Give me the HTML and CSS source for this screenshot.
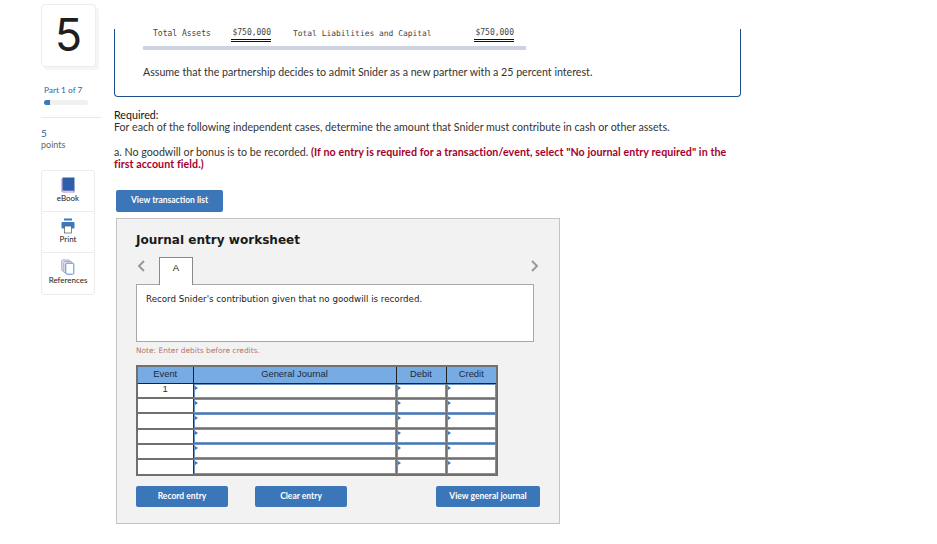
FILE: index.html
```html
<!DOCTYPE html>
<html lang="en">
<head>
<meta charset="utf-8">
<title>Journal entry worksheet</title>
<link rel="stylesheet" href="styles.css">
</head>
<body>
<div class="page">
  <aside class="side">
    <div class="num-card"><div class="num">5</div></div>
    <div class="part">Part 1 of 7</div>
    <div class="progress"><div class="progress-fill"></div></div>
    <div class="pts"><div class="pts-n">5</div><div class="pts-l">points</div></div>
    <div class="tools">
      <div class="tool">
        <svg class="tool-icon" viewBox="0 0 14 16" width="14" height="16"><path d="M1 1.5 L1 14 Q1 15 2.5 15 L13 15 L13 13.5 L2.5 13.5" fill="none" stroke="#a98fd0" stroke-width="1.2"/><rect x="1.5" y="0.5" width="12" height="13" fill="#2f5ea8"/></svg>
        <span>eBook</span>
      </div>
      <div class="tool">
        <svg class="tool-icon" viewBox="0 0 14 16" width="14" height="16"><rect x="3" y="0.5" width="8" height="2" fill="#3b78bd"/><rect x="0.5" y="4" width="13" height="6.5" rx="1" fill="#3b78bd"/><rect x="3.5" y="8" width="7" height="7" fill="#fff" stroke="#555" stroke-width="0.7"/></svg>
        <span>Print</span>
      </div>
      <div class="tool">
        <svg class="tool-icon" viewBox="0 0 14 16" width="14" height="16"><rect x="0.8" y="1" width="8" height="11" rx="1" fill="#eee" stroke="#b49bd6"/><rect x="2.8" y="2.5" width="8" height="11" rx="1" fill="#eee" stroke="#9aa8d8"/><rect x="4.8" y="4.2" width="8" height="11" rx="1" fill="#fff" stroke="#5f8ccb"/></svg>
        <span>References</span>
      </div>
    </div>
  </aside>
  <main class="main">
    <section class="case-box">
      <div class="ledger">
        <span class="l-a">Total Assets</span>
        <span class="l-b amt">$750,000</span>
        <span class="l-c">Total Liabilities and Capital</span>
        <span class="l-d amt">$750,000</span>
      </div>
      <div class="ledger-bar"></div>
      <p class="assume">Assume that the partnership decides to admit Snider as a new partner with a 25 percent interest.</p>
    </section>
    <p class="req"><span class="req-h">Required:</span><br>For each of the following independent cases, determine the amount that Snider must contribute in cash or other assets.</p>
    <p class="part-a">a. No goodwill or bonus is to be recorded. <b class="warn">(If no entry is required for a transaction/event, select "No journal entry required" in the</b><br><b class="warn">first account field.)</b></p>
    <button class="btn btn-list">View transaction list</button>
    <section class="panel">
      <h2 class="panel-h">Journal entry worksheet</h2>
      <div class="tabs">
        <svg class="chev" viewBox="0 0 10 14" width="10" height="14"><path d="M8 2 L3 7 L8 12" fill="none" stroke="#999" stroke-width="2"/></svg>
        <div class="tab">A</div>
        <svg class="chev chev-r" viewBox="0 0 10 14" width="10" height="14"><path d="M2 2 L7 7 L2 12" fill="none" stroke="#999" stroke-width="2"/></svg>
      </div>
      <div class="instr">Record Snider's contribution given that no goodwill is recorded.</div>
      <div class="note">Note: Enter debits before credits.</div>
      <table class="je">
        <thead><tr><th class="c-ev">Event</th><th class="c-gj">General Journal</th><th class="c-dr">Debit</th><th class="c-cr">Credit</th></tr></thead>
        <tbody>
          <tr><td class="ev">1</td><td class="in"><div class="field"></div></td><td class="in"><div class="field"></div></td><td class="in"><div class="field"></div></td></tr>
          <tr><td class="ev"></td><td class="in"><div class="field"></div></td><td class="in"><div class="field"></div></td><td class="in"><div class="field"></div></td></tr>
          <tr><td class="ev"></td><td class="in"><div class="field"></div></td><td class="in"><div class="field"></div></td><td class="in"><div class="field"></div></td></tr>
          <tr><td class="ev"></td><td class="in"><div class="field"></div></td><td class="in"><div class="field"></div></td><td class="in"><div class="field"></div></td></tr>
          <tr><td class="ev"></td><td class="in"><div class="field"></div></td><td class="in"><div class="field"></div></td><td class="in"><div class="field"></div></td></tr>
          <tr><td class="ev"></td><td class="in"><div class="field"></div></td><td class="in"><div class="field"></div></td><td class="in"><div class="field"></div></td></tr>
        </tbody>
      </table>
      <div class="actions">
        <button class="btn btn-rec">Record entry</button>
        <button class="btn btn-clr">Clear entry</button>
        <button class="btn btn-view">View general journal</button>
      </div>
    </section>
  </main>
</div>
</body>
</html>
```
FILE: styles.css
```css
* { box-sizing: border-box; }
html, body { margin: 0; padding: 0; background: #fff; }
body { width: 937px; height: 544px; overflow: hidden; font-family: "Lato", "Open Sans", sans-serif; color: #222; }
.page { display: flex; align-items: flex-start; padding-left: 41px; }

.side { width: 54px; flex: none; padding-top: 4px; }
.num-card { width: 55px; height: 63px; border: 1px solid #ececec; border-radius: 4px; background: #fff; box-shadow: 3px 3px 0 0 #f5f5f5; display: flex; align-items: center; justify-content: center; padding-bottom: 2px; }
.num { font-family: "Inter", "Open Sans", sans-serif; font-size: 45px; line-height: 1; color: #1e1e1e; }
.part { margin: 17px 0 0 3px; font-size: 8.3px; line-height: 12px; color: #2f5fa5; white-space: nowrap; }
.progress { margin: 4px 0 0 3px; width: 44px; height: 5px; border-radius: 3px; background: #f0f0f0; overflow: hidden; }
.progress-fill { width: 6px; height: 5px; background: #3b78bd; }
.pts { margin-top: 12px; border-top: 1px solid #e8e8e8; padding-top: 9px; width: 60px; }
.pts-n { font-size: 10px; line-height: 12px; color: #2f5a96; }
.pts-l { font-size: 9px; line-height: 12px; color: #666; }
.tools { margin-top: 19px; width: 54px; border: 1px solid #ececec; border-radius: 3px; }
.tool { height: 41px; border-bottom: 1px solid #ececec; display: flex; flex-direction: column; align-items: center; padding-top: 6px; font-size: 8px; line-height: 10px; color: #222; white-space: nowrap; }
.tool:last-child { border-bottom: 0; }
.tool-icon { display: block; }

.main { margin-left: 19px; width: 640px; flex: none; padding-top: 29px; }
.case-box { width: 627px; height: 68px; border: 1px solid #1d4f8c; border-top: 0; border-radius: 0 0 4px 4px; padding: 0 0 0 28px; }
.ledger { display: flex; height: 17px; padding-top: 1px; font-family: "DejaVu Sans Mono", monospace; font-size: 8px; line-height: 8px; color: #444; white-space: nowrap; }
.l-a { margin: 0 0 0 10px; width: 78px; }
.l-b, .l-d { height: 13px; border-bottom: 3px double #111; width: 40px; text-align: right; }
.l-b { margin-top: -1px; }
.l-c { margin-left: 22px; width: 183px; font-size: 7.95px; }
.l-d { margin-left: -2px; margin-top: -1px; }
.ledger-bar { width: 383px; height: 4px; background: #cdd2e0; }
.assume { margin: 15px 0 0 0; font-size: 10.65px; line-height: 14px; color: #333; white-space: nowrap; }
.req { margin: 12px 0 0 0; font-size: 10.68px; line-height: 12px; color: #333; white-space: nowrap; }
.req-h { color: #111; }
.part-a { margin: 13px 0 0 0; font-size: 10.68px; line-height: 12px; color: #333; white-space: nowrap; }
.warn { color: #a5002d; font-weight: 700; letter-spacing: 0.07px; }

.btn { display: block; border: 0; border-radius: 2px; background: #3a76b8; color: #fff; font-family: "Lato", sans-serif; font-weight: 700; font-size: 8.5px; height: 21px; padding: 0; }
.btn-list { margin: 20px 0 0 2px; width: 107px; height: 22px; padding-bottom: 2px; }

.panel { margin: 6px 0 0 2px; width: 444px; height: 306px; background: #f2f2f2; border: 1px solid #c4c4c4; padding: 0 0 0 19px; }
.panel-h { margin: 13px 0 0 0; font-family: "DejaVu Sans", sans-serif; font-size: 12.06px; line-height: 16px; font-weight: 700; color: #1a1a1a; }
.tabs { display: flex; align-items: flex-start; height: 27px; margin-top: 9px; width: 404px; }
.chev { margin: 2px 13px 0 0; flex: none; }
.chev-r { margin: 2px 0 0 auto; }
.tab { width: 34px; height: 28px; background: #fff; border: 1px solid #8a8a8a; border-bottom: 0; font-family: "Liberation Sans", sans-serif; font-size: 9.5px; line-height: 20px; text-align: center; color: #222; position: relative; z-index: 1; }
.instr { width: 398px; height: 58px; background: #fff; border: 1px solid #a8a8a8; padding: 8px 9px; font-family: "DejaVu Sans", sans-serif; font-size: 8.7px; line-height: 12px; color: #222; white-space: nowrap; }
.note { margin-top: 4px; font-family: "DejaVu Sans", sans-serif; font-size: 7.45px; line-height: 10px; color: #b3786a; white-space: nowrap; }

.je { margin-top: 9px; width: 360px; table-layout: fixed; border-collapse: collapse; border: 2px solid #707070; font-family: "Liberation Sans", sans-serif; }
.c-ev { width: 56px; }
.c-gj { width: 203px; }
.c-dr { width: 50px; }
.c-cr { width: 51px; }
.je th { height: 17px; padding: 0 0 2px; background: #76abe3; font-size: 9.4px; font-weight: 400; color: #1c2a3a; border-right: 1px solid #222; border-bottom: 1px solid #222; }
.je th:last-child { border-right: 0; }
.je td { padding: 0; height: 15.2px; background: #fff; }
.je td.ev { padding-bottom: 2px; text-align: center; font-size: 9.5px; line-height: 10px; color: #333; border-right: 1px solid #333; border-bottom: 2px solid #707070; }
.je tr:last-child td.ev { border-bottom: 0; }
.in { border-right: 1px solid #707070; border-bottom: 1px solid #707070; }
.in:last-child { border-right: 0; }
tr:last-child .in { border-bottom: 0; }
.field { height: 14.2px; background: #fff; border: 1px solid #6d94c6; position: relative; }
.field::before { content: ""; position: absolute; left: 0; top: 1px; border-left: 3px solid #3a76b8; border-top: 2px solid transparent; border-bottom: 2px solid transparent; }

.actions { display: flex; margin-top: 10px; width: 404px; }
.btn-rec { width: 92px; }
.btn-clr { width: 92px; margin-left: 27px; }
.btn-view { width: 104px; margin-left: 89px; }
```
